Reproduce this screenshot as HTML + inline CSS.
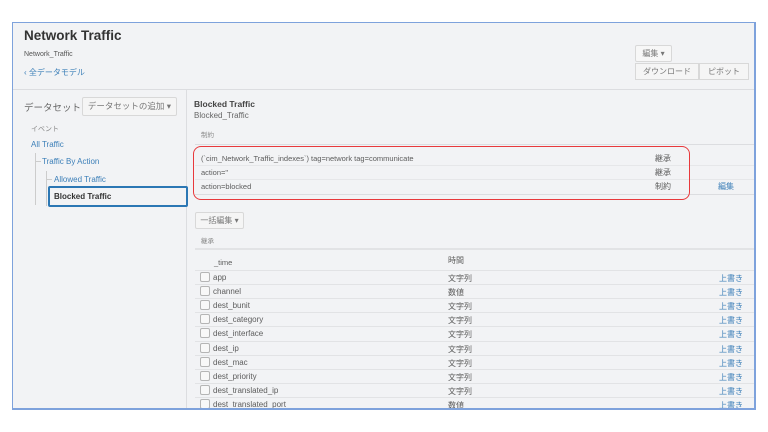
<!DOCTYPE html>
<html><head><meta charset="utf-8"><style>
*{margin:0;padding:0;box-sizing:border-box}
body{width:768px;height:432px;background:#fff;position:relative;overflow:hidden;font-family:"Liberation Sans","Noto Sans CJK JP",sans-serif;color:#5c5c5c}
.f{position:absolute;left:12px;top:22px;width:744px;height:388px;border:1px solid #7ea2dc;border-right-width:2px;border-bottom-width:2px;background:#f2f3f5;overflow:hidden}
.a{position:absolute;white-space:nowrap}
.lnk{color:#3c7fb8}
.btn{position:absolute;border:1px solid #d8d8d8;background:#f5f5f5;border-radius:2px;font-size:8px;color:#777;text-align:center}
.row{position:absolute;left:186px;width:560px;height:14px;border-top:1px solid #e2e3e5;font-size:8px}
.cb{position:absolute;left:13px;top:1px;width:10px;height:10px;border:1px solid #b5b5b5;border-radius:2px;background:#f8f8f8}
</style></head><body>
<div class="f">
<div class="a" style="left:11px;top:5px;font-size:13.5px;font-weight:bold;color:#333">Network Traffic</div>
<div class="a" style="left:11px;top:28px;font-size:7px;color:#555">Network_Traffic</div>
<div class="a lnk" style="left:11px;top:44px;font-size:8px">‹ 全データモデル</div>
<div class="btn" style="left:622px;top:22px;width:37px;height:17px;line-height:15px;background:#f7f7f7">編集 ▾</div>
<div class="btn" style="left:622px;top:40px;width:64px;height:17px;line-height:15px;border-radius:0">ダウンロード</div>
<div class="btn" style="left:686px;top:40px;width:50px;height:17px;line-height:15px;border-radius:0">ピボット</div>
<div class="a" style="left:0;top:66px;width:744px;border-top:1px solid #dcdde0"></div>
<div class="a" style="left:173px;top:67px;height:330px;border-left:1px solid #dcdde0"></div>
<div class="a" style="left:11px;top:77px;font-size:9.5px;color:#666">データセット</div>
<div class="btn" style="left:69px;top:74px;width:95px;height:19px;line-height:17px;font-size:8.5px">データセットの追加 ▾</div>
<div class="a" style="left:18px;top:101px;font-size:7px;color:#888">イベント</div>
<div class="a lnk" style="left:18px;top:117px;font-size:8px">All Traffic</div>
<div class="a" style="left:22px;top:130px;height:52px;border-left:1px solid #ccc"></div>
<div class="a" style="left:22px;top:138px;width:6px;border-top:1px solid #ccc"></div>
<div class="a lnk" style="left:29px;top:134px;font-size:8px">Traffic By Action</div>
<div class="a" style="left:33px;top:148px;height:35px;border-left:1px solid #ccc"></div>
<div class="a" style="left:33px;top:156px;width:6px;border-top:1px solid #ccc"></div>
<div class="a lnk" style="left:41px;top:152px;font-size:8px">Allowed Traffic</div>
<div class="a" style="left:35px;top:163px;width:140px;height:21px;border:2px solid #2c77b4;border-radius:2px"></div>
<div class="a" style="left:41px;top:169px;font-size:8px;font-weight:bold;color:#333">Blocked Traffic</div>
<div class="a" style="left:181px;top:76px;font-size:8.5px;font-weight:bold;color:#444">Blocked Traffic</div>
<div class="a" style="left:181px;top:88px;font-size:8px;color:#666">Blocked_Traffic</div>
<div class="a" style="left:188px;top:106px;font-size:6.5px;color:#888">制約</div>
<div class="a" style="left:182px;top:121px;width:562px;border-top:1px solid #dcdde0"></div>
<div class="a" style="left:182px;top:142px;width:562px;border-top:1px solid #e6e7e9"></div>
<div class="a" style="left:182px;top:156px;width:562px;border-top:1px solid #e6e7e9"></div>
<div class="a" style="left:182px;top:171px;width:562px;border-top:1px solid #dcdde0"></div>
<div class="a" style="left:188px;top:131px;font-size:7.5px">(`cim_Network_Traffic_indexes`) tag=network tag=communicate</div>
<div class="a" style="left:188px;top:145px;font-size:7.5px">action="</div>
<div class="a" style="left:188px;top:159px;font-size:7.5px">action=blocked</div>
<div class="a" style="left:642px;top:130px;font-size:8px">継承</div>
<div class="a" style="left:642px;top:144px;font-size:8px">継承</div>
<div class="a" style="left:642px;top:158px;font-size:8px">制約</div>
<div class="a lnk" style="left:705px;top:158px;font-size:8px">編集</div>
<div class="a" style="left:180px;top:123px;width:497px;height:54px;border:1px solid #e8393c;border-radius:8px"></div>
<div class="btn" style="left:182px;top:189px;width:49px;height:17px;line-height:15px;font-size:8px">一括編集 ▾</div>
<div class="a" style="left:188px;top:212px;font-size:6.5px;color:#888">継承</div>
<div class="a" style="left:182px;top:225px;width:562px;border-top:2px solid #e2e3e5"></div>
<div class="a" style="left:201px;top:235px;font-size:7.5px">_time</div>
<div class="a" style="left:435px;top:232px;font-size:8px">時間</div>
<div id="rows"></div>
</div>
<script>
var d=[["app","文字列"],["channel","数値"],["dest_bunit","文字列"],["dest_category","文字列"],["dest_interface","文字列"],["dest_ip","文字列"],["dest_mac","文字列"],["dest_priority","文字列"],["dest_translated_ip","文字列"],["dest_translated_port","数値"]];
var h="";for(var i=0;i<d.length;i++){var t=246.5+i*14.2;
h+='<div class="row" style="left:182px;top:'+t+'px"><div class="cb" style="left:5px"></div><span class="a" style="left:18px;top:2px">'+d[i][0]+'</span><span class="a" style="left:253px;top:2px">'+d[i][1]+'</span><span class="a lnk" style="left:524px;top:2px">上書き</span></div>';}
document.getElementById("rows").innerHTML=h;
</script>
</body></html>
